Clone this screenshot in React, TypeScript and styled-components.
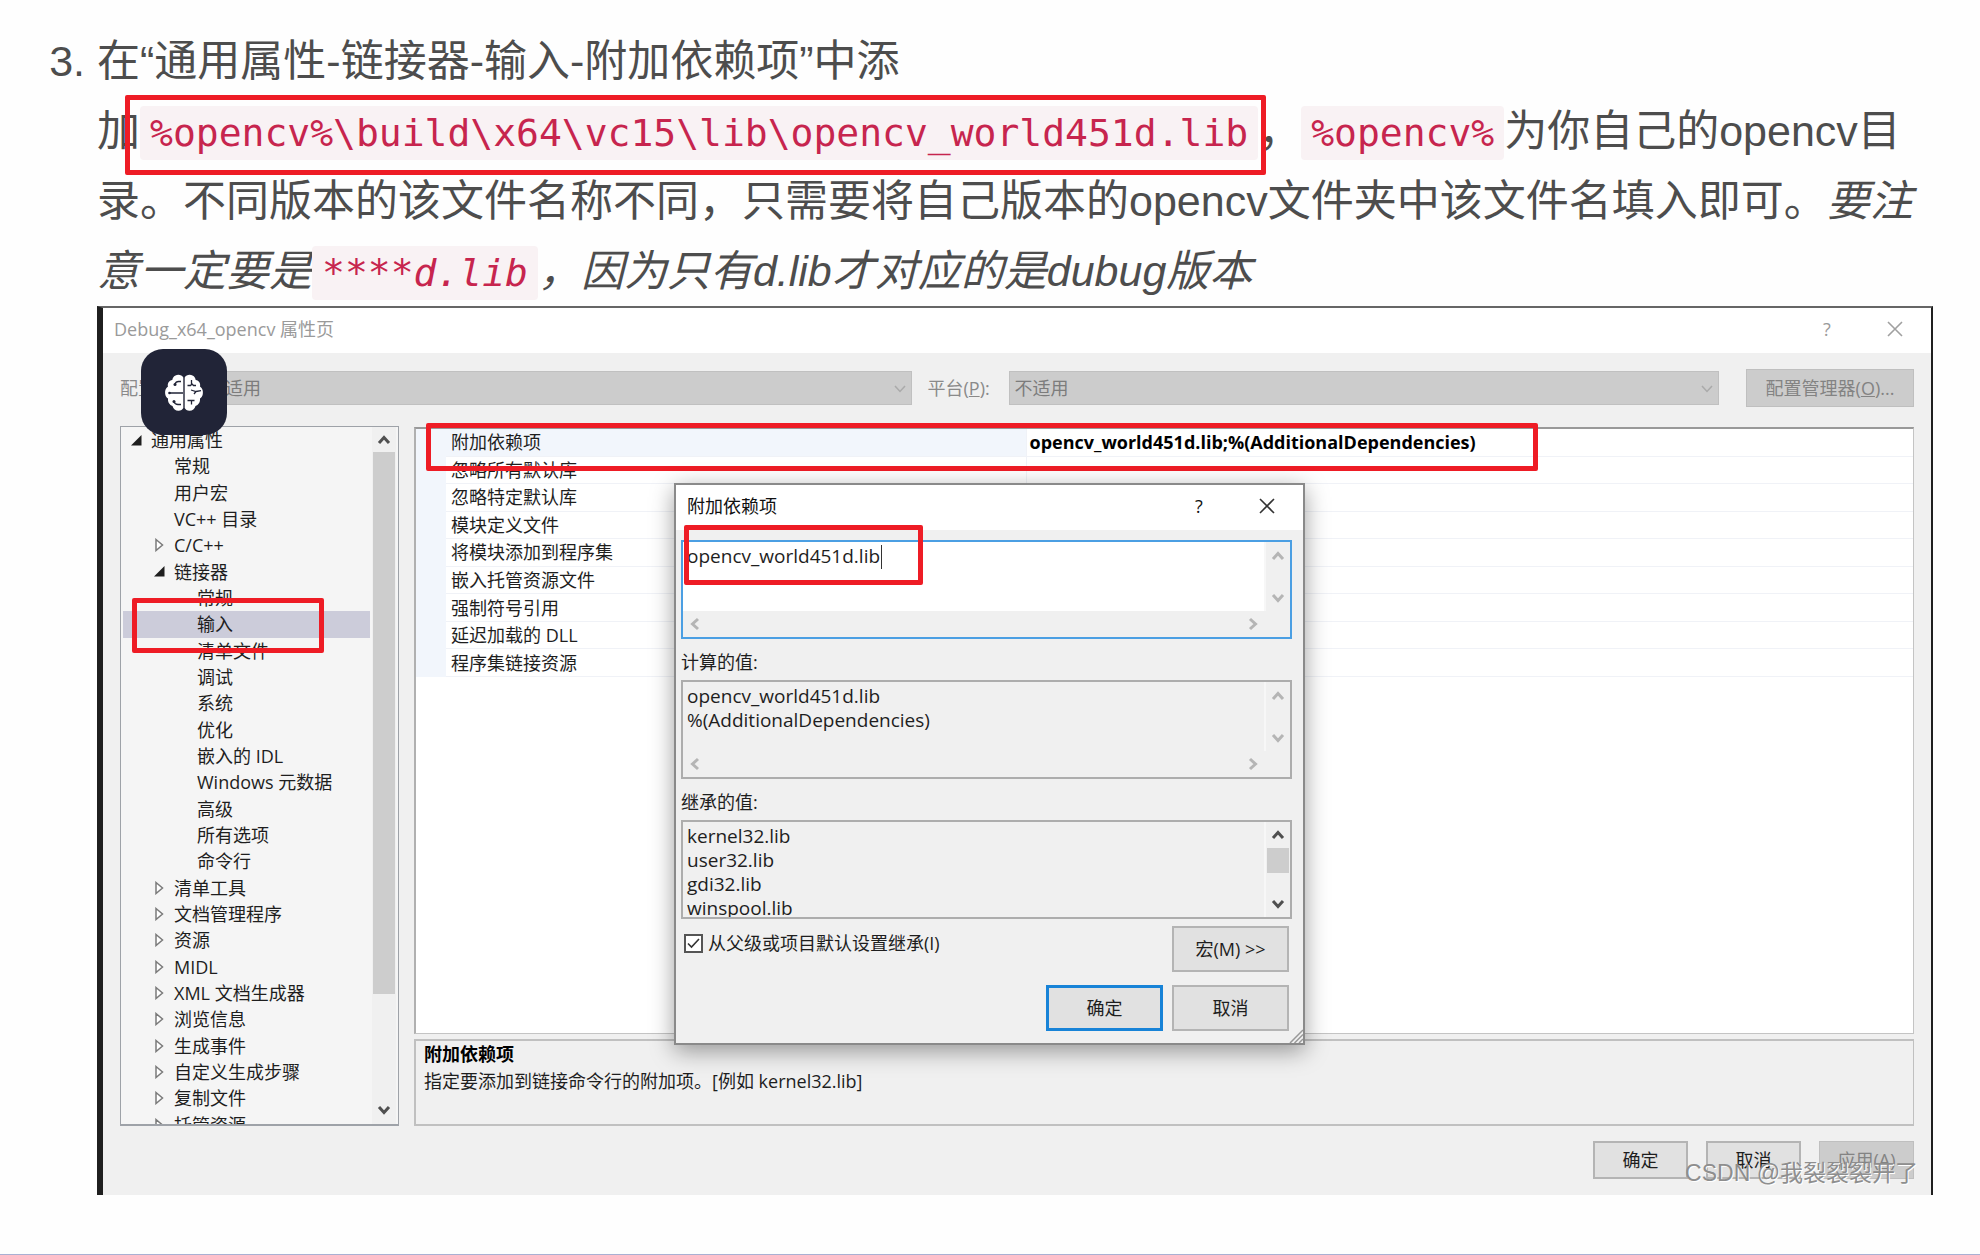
import React from 'react';
import styled, { createGlobalStyle } from 'styled-components';

const uiFont = `"Open Sans", "Noto Sans CJK SC", sans-serif`;
const articleFont = `"Liberation Sans", "Noto Sans CJK SC", sans-serif`;
const red = '#ee1c25';

const GlobalStyle = createGlobalStyle`
  *, *::before, *::after { box-sizing: border-box; }
  body { margin: 0; background: #fefefe; }
  button, select, textarea, input { font: inherit; color: inherit; margin: 0; }
`;

const Page = styled.div`
  display: flex;
  flex-direction: column;
  min-height: 100vh;
  padding: 26px 47px 0 97px;
  border-bottom: 1px solid #a9b0d3;
  font-family: ${articleFont};
  color: #4d4d4d;
`;

const Steps = styled.ol`
  margin: 0;
  padding: 0;
  font-size: 43px;
  line-height: 70px;
`;

const Code = styled.code`
  position: relative;
  padding: 5px 10px;
  border-radius: 4px;
  background: #f9f2f4;
  color: #c7254e;
  font-family: "DejaVu Sans Mono", monospace;
  font-size: 38px;
  line-height: 44px;
  white-space: nowrap;
`;

const Mark = styled.span`
  position: absolute;
  z-index: 1;
  border: 5px solid ${red};
  border-radius: 2px;
  pointer-events: none;
`;

const CodeMark = styled(Mark)`
  inset: -11px -8px -15px -15px;
`;

const RowMark = styled(Mark)`
  top: -6px;
  left: 10px;
  right: 375px;
  height: 48px;
`;

const TreeMark = styled(Mark)`
  top: 290px;
  left: 29px;
  width: 192px;
  height: 55px;
`;

const EditMark = styled(Mark)`
  top: -5px;
  left: 8px;
  width: 239px;
  height: 60px;
`;

const WindowFrame = styled.section`
  position: relative;
  border: solid #1f1f1f;
  border-width: 2px 2px 0 6px;
  border-top-color: #666;
  background: #f0f0f0;
  font-family: ${uiFont};
  font-size: 18px;
  line-height: 24px;
  color: #1e1e1e;
`;

const TitleBar = styled.header<{ $muted?: boolean }>`
  display: flex;
  align-items: center;
  height: 45px;
  padding: 0 24px 3px 11px;
  background: #fff;
  color: ${(p) => (p.$muted ? '#9a9a9a' : '#111')};
`;

const Title = styled.h2`
  flex: 1;
  margin: 0;
  font-size: 18px;
  font-weight: 400;
`;

const CaptionButton = styled.button`
  display: grid;
  place-items: center;
  width: 24px;
  height: 28px;
  margin-left: 44px;
  padding: 0;
  border: 0;
  background: none;
`;

const ConfigBar = styled.div`
  display: flex;
  align-items: center;
  height: 38px;
  margin: 16px 17px 19px;
  color: #8a8a8a;
`;

const ConfigLabel = styled.label`
  width: 81px;
  white-space: nowrap;
`;

const SelectWrap = styled.div<{ $gap: number }>`
  position: relative;
  flex: 1;
  margin-right: ${(p) => p.$gap}px;
`;

const Select = styled.select`
  appearance: none;
  display: block;
  width: 100%;
  height: 34px;
  padding: 0 5px;
  border: 1px solid #c0c0c0;
  border-radius: 0;
  background: #ccc;
  opacity: 1;
  color: #7c7c7c;
`;

const SelectArrow = styled.span`
  position: absolute;
  top: 11px;
  right: 5px;
  display: flex;
`;

const PushButton = styled.button<{ $width: number; $tall?: boolean; $primary?: boolean }>`
  width: ${(p) => p.$width}px;
  height: ${(p) => (p.$tall ? 46 : 38)}px;
  padding: 0;
  border: ${(p) => (p.$primary ? '3px solid #1883d7' : '2px solid #b4b4b4')};
  background: #e1e1e1;
  white-space: nowrap;
  &:disabled {
    border: 1px solid #bfbfbf;
    background: #ccc;
    color: #838383;
  }
`;

const Workspace = styled.div`
  display: flex;
  gap: 15px;
  height: 700px;
  margin: 0 17px;
`;

const TreePanel = styled.nav`
  display: grid;
  grid-template-columns: 1fr 24px;
  column-gap: 2px;
  width: 279px;
  padding-right: 2px;
  border: 2px solid #9ea2a8;
  border-width: 1px 1px 2px;
  background: #f5f5f5;
  overflow: hidden;
`;

/* The last row is cut by the lower edge of the panel. */
const TreeList = styled.ul`
  display: grid;
  grid-auto-rows: 1fr;
  height: calc(100% + 14px);
  margin: 0 0 0 2px;
  padding: 0;
  list-style: none;
`;

const TreeItem = styled.li<{ $level: number; $selected?: boolean }>`
  display: flex;
  align-items: center;
  padding-left: ${(p) => 8 + p.$level * 23}px;
  background: ${(p) => (p.$selected ? '#ccccda' : 'transparent')};
  white-space: nowrap;
`;

const Twisty = styled.span`
  display: flex;
  width: 20px;
  flex: none;
`;

const ScrollTrack = styled.div`
  display: flex;
  flex-direction: column;
  align-items: center;
  background: #f0f0f0;
`;

const ArrowSlot = styled.span<{ $size: number }>`
  display: grid;
  place-items: center;
  width: 100%;
  height: ${(p) => p.$size}px;
`;

const Thumb = styled.span<{ $height: number }>`
  width: 22px;
  height: ${(p) => p.$height}px;
  margin-bottom: auto;
  background: #cdcdcd;
`;

const Details = styled.div`
  display: flex;
  flex: 1;
  flex-direction: column;
  gap: 5px;
  min-width: 0;
  padding-top: 1px;
`;

const GridPanel = styled.div`
  position: relative;
  flex: 1;
  border: 1px solid #c4c4c4;
  border-top: 2px solid #999;
  border-left: 2px solid #b0b0b0;
  background: #fff;
`;

const PropertyTable = styled.table`
  width: 100%;
  height: 248px;
  border-collapse: collapse;
  table-layout: fixed;
`;

const NameCell = styled.th<{ $selected?: boolean }>`
  width: 595px;
  padding: 0 0 0 5px;
  border-left: 30px solid #f2f6fc;
  border-bottom: 1px solid #f0f2f7;
  border-right: 1px solid #f0f2f7;
  background: ${(p) => (p.$selected ? '#f2f6fc' : '#fff')};
  font-weight: 400;
  text-align: left;
`;

const ValueCell = styled.td`
  padding: 0 0 0 3px;
  border-bottom: 1px solid #f0f2f7;
  color: #000;
  font-weight: 700;
`;

const Description = styled.div`
  height: 87px;
  padding: 0 8px;
  border: 2px solid #c0c0c0;
  border-right-width: 1px;
  p { margin: 0; line-height: 27px; white-space: nowrap; }
  p:first-child { font-weight: 700; color: #000; }
`;

const Footer = styled.footer`
  position: relative;
  display: flex;
  justify-content: flex-end;
  gap: 18px;
  padding: 15px 17px 16px;
`;

const Watermark = styled.span`
  position: absolute;
  right: 13px;
  bottom: 6px;
  font-family: ${articleFont};
  font-size: 23px;
  line-height: 32px;
  color: #8e8e8e;
  text-shadow: 1px 1px 0 #fff;
  white-space: nowrap;
`;

const AppBadge = styled.button`
  position: absolute;
  top: 41px;
  left: 38px;
  z-index: 2;
  display: grid;
  place-items: center;
  width: 86px;
  height: 86px;
  padding: 2px 0 0;
  border: 0;
  border-radius: 22px;
  background: #212437;
`;

const Dialog = styled.section`
  position: absolute;
  top: 175px;
  left: 571px;
  z-index: 3;
  width: 631px;
  border: 2px solid #8a8a8a;
  background: #f0f0f0;
  box-shadow: 0 6px 22px rgba(0, 0, 0, 0.38);
`;

const DialogBody = styled.div`
  position: relative;
  display: flex;
  flex-direction: column;
  padding: 10px 11px 12px 5px;
`;

const FieldLabel = styled.label`
  margin: 10px 0 5px;
  line-height: 26px;
`;

const Field = styled.div<{ $active?: boolean; $wide?: boolean }>`
  position: relative;
  display: grid;
  grid-template-columns: 1fr 24px;
  grid-template-rows: 1fr ${(p) => (p.$wide ? '' : '26px')};
  height: 99px;
  border: 2px solid ${(p) => (p.$active ? '#4b9fe3' : '#adadad')};
  background: #f0f0f0;
`;

const FieldText = styled.textarea<{ $active?: boolean }>`
  display: block;
  width: 100%;
  height: 100%;
  padding: 2px 4px 0;
  border: 0;
  border-right: 2px solid #f7f7f7;
  border-radius: 0;
  outline: 0;
  resize: none;
  overflow: hidden;
  white-space: pre;
  font-size: 19px;
  line-height: 24px;
  background: ${(p) => (p.$active ? '#fff' : 'transparent')};
`;

const Caret = styled.span`
  position: absolute;
  top: 3px;
  left: 198px;
  width: 1px;
  height: 24px;
  background: #333;
`;

const VerticalBar = styled(ScrollTrack)`
  justify-content: space-between;
  background: none;
`;

const HorizontalBar = styled.div`
  display: flex;
  align-items: center;
  justify-content: space-between;
  padding: 0 6px 0 5px;
`;

const OptionRow = styled.div`
  display: flex;
  align-items: flex-start;
  justify-content: space-between;
  padding: 7px 3px 0 3px;
`;

const CheckLabel = styled.label`
  display: flex;
  align-items: center;
  gap: 5px;
  height: 34px;
`;

const Check = styled.span`
  position: relative;
  display: grid;
  place-items: center;
  width: 19px;
  height: 19px;
  input {
    appearance: none;
    position: absolute;
    inset: 0;
    border: 2px solid #555;
    background: #fff;
  }
  svg { position: relative; }
`;

const DialogButtons = styled.div`
  display: flex;
  justify-content: flex-end;
  gap: 9px;
  padding: 13px 3px 0 0;
`;

const Grip = styled.svg`
  position: absolute;
  right: 0;
  bottom: 0;
`;

const turns = { up: 0, right: 90, down: 180, left: 270 };

const Chevron = ({ dir, color = '#505050', stroke = 3 }: { dir: keyof typeof turns; color?: string; stroke?: number }) => (
  <svg width="14" height="14" viewBox="0 0 14 14" fill="none" aria-hidden="true">
    <path d="M2 10 7 4.500 12 10" stroke={color} strokeWidth={stroke} transform={`rotate(${turns[dir]} 7 7)`} />
  </svg>
);

const Cross = ({ color }: { color: string }) => (
  <svg width="16" height="16" viewBox="0 0 16 16" aria-hidden="true">
    <path d="M1 1 15 15M15 1 1 15" stroke={color} strokeWidth="1.600" />
  </svg>
);

const Brain = () => (
  <svg width="40" height="38" viewBox="0 0 40 38" aria-hidden="true">
    <path
      fill="#fff"
      d="M19.300 3.500C18 .8 14 .2 11.500 1.500 9.500 2.500 8.500 4.200 8.300 6 5 6.500 3.200 9.500 4 12.500 1.500 14 .8 17 1.200 20c.3 2.300 1.400 3.700 2.800 4.500-.4 3.500 1.500 6.500 4.500 7.500.8 3 3.300 5 6.200 4.800 2-.1 3.900-1.200 4.600-2.800zM20.700 3.500C22 .8 26 .2 28.500 1.500c2 1 3 2.700 3.200 4.500 3.300.5 5.100 3.500 4.300 6.500 2.500 1.500 3.200 4.500 2.800 7.500-.3 2.300-1.400 3.700-2.800 4.500.4 3.500-1.500 6.500-4.500 7.500-.8 3-3.300 5-6.200 4.800-2-.1-3.900-1.200-4.600-2.800z"
    />
    <g fill="none" stroke="#212437" strokeWidth="1.300">
      <path d="M17 7.500h-2.500c-2 0-3 1.200-3.500 2.800M5 19h14M17 30.500h-3c-2 0-3.500-1.200-4.200-3" />
      <path d="M27.500 6v4.500M23.500 11.500h3l1.500-1.500 1.500 1.500h2.500M27 16l5 1.500 5-.8M32 17.500 30 20M23.500 26.500h7M27.500 26.500v4" />
    </g>
    <g fill="#212437">
      <circle cx="11" cy="10.500" r="1.500" />
      <circle cx="5.500" cy="19" r="1.300" />
      <circle cx="10" cy="27.500" r="1.500" />
    </g>
  </svg>
);

type Node = [level: number, text: string, state?: 'open' | 'closed'];

const nodes: Node[] = [
  [0, '通用属性', 'open'],
  [1, '常规'],
  [1, '用户宏'],
  [1, 'VC++ 目录'],
  [1, 'C/C++', 'closed'],
  [1, '链接器', 'open'],
  [2, '常规'],
  [2, '输入'],
  [2, '清单文件'],
  [2, '调试'],
  [2, '系统'],
  [2, '优化'],
  [2, '嵌入的 IDL'],
  [2, 'Windows 元数据'],
  [2, '高级'],
  [2, '所有选项'],
  [2, '命令行'],
  [1, '清单工具', 'closed'],
  [1, '文档管理程序', 'closed'],
  [1, '资源', 'closed'],
  [1, 'MIDL', 'closed'],
  [1, 'XML 文档生成器', 'closed'],
  [1, '浏览信息', 'closed'],
  [1, '生成事件', 'closed'],
  [1, '自定义生成步骤', 'closed'],
  [1, '复制文件', 'closed'],
  [1, '托管资源', 'closed'],
];

const properties = [
  ['附加依赖项', 'opencv_world451d.lib;%(AdditionalDependencies)'],
  ['忽略所有默认库', ''],
  ['忽略特定默认库', ''],
  ['模块定义文件', ''],
  ['将模块添加到程序集', ''],
  ['嵌入托管资源文件', ''],
  ['强制符号引用', ''],
  ['延迟加载的 DLL', ''],
  ['程序集链接资源', ''],
];

const TwistyIcon = ({ state }: { state?: 'open' | 'closed' }) => (
  <Twisty>
    {state === 'open' && (
      <svg width="11" height="11" viewBox="0 0 11 11" aria-hidden="true">
        <path d="M10.500 0v10.500H0z" fill="#1e1e1e" />
      </svg>
    )}
    {state === 'closed' && (
      <svg width="11" height="14" viewBox="0 0 11 14" aria-hidden="true">
        <path d="M2 1.500 8.500 7 2 12.500z" fill="#fff" stroke="#7b7b7b" strokeWidth="1.500" />
      </svg>
    )}
  </Twisty>
);

const pale = '#b5b5b5';

const ValueBox = ({ id, value, active }: { id: string; value: string; active?: boolean }) => (
  <Field $active={active}>
    <FieldText
      id={id}
      $active={active}
      defaultValue={value}
      readOnly={!active}
      spellCheck={false}
      aria-label={active ? '附加依赖项' : undefined}
    />
    <VerticalBar>
      <ArrowSlot $size={28}><Chevron dir="up" color={pale} /></ArrowSlot>
      <ArrowSlot $size={26}><Chevron dir="down" color={pale} /></ArrowSlot>
    </VerticalBar>
    <HorizontalBar>
      <Chevron dir="left" color={pale} />
      <Chevron dir="right" color={pale} />
    </HorizontalBar>
    {active && <Caret />}
  </Field>
);

const DependenciesDialog = () => (
  <Dialog role="dialog" aria-label="附加依赖项">
    <TitleBar>
      <Title>附加依赖项</Title>
      <CaptionButton>?</CaptionButton>
      <CaptionButton aria-label="关闭"><Cross color="#333" /></CaptionButton>
    </TitleBar>
    <DialogBody>
      <ValueBox id="edit" value="opencv_world451d.lib" active />
      <FieldLabel htmlFor="evaluated">计算的值:</FieldLabel>
      <ValueBox id="evaluated" value={'opencv_world451d.lib\n%(AdditionalDependencies)'} />
      <FieldLabel htmlFor="inherited">继承的值:</FieldLabel>
      <Field $wide>
        <FieldText id="inherited" readOnly defaultValue={'kernel32.lib\nuser32.lib\ngdi32.lib\nwinspool.lib'} />
        <ScrollTrack>
          <ArrowSlot $size={26}><Chevron dir="up" /></ArrowSlot>
          <Thumb $height={25} />
          <ArrowSlot $size={26}><Chevron dir="down" /></ArrowSlot>
        </ScrollTrack>
      </Field>
      <OptionRow>
        <CheckLabel>
          <Check>
            <input type="checkbox" defaultChecked />
            <svg width="15" height="15" viewBox="0 0 15 15" fill="none" aria-hidden="true">
              <path d="M2 7.500 5.500 11 13 3" stroke="#333" strokeWidth="1.600" />
            </svg>
          </Check>
          从父级或项目默认设置继承(I)
        </CheckLabel>
        <PushButton $width={117} $tall>宏(M) &gt;&gt;</PushButton>
      </OptionRow>
      <DialogButtons>
        <PushButton $width={117} $tall $primary>确定</PushButton>
        <PushButton $width={117} $tall>取消</PushButton>
      </DialogButtons>
      <Grip width="14" height="14" viewBox="0 0 14 14" aria-hidden="true">
        <path d="M1 14 14 1M5.500 14 14 5.500M10 14 14 10" stroke="#999" strokeWidth="1.500" />
      </Grip>
      <EditMark />
    </DialogBody>
  </Dialog>
);

const App = () => (
  <>
    <GlobalStyle />
    <Page>
      <Steps start={3}>
        <li>
          在“通用属性-链接器-输入-附加依赖项”中添加
          <Code>
            %opencv%\build\x64\vc15\lib\opencv_world451d.lib
            <CodeMark />
          </Code>
          ，<Code>%opencv%</Code>
          为你自己的opencv目录。不同版本的该文件名称不同，只需要将自己版本的opencv文件夹中该文件名填入即可。
          <em>
            要注意一定要是<Code>****d.lib</Code>，因为只有d.lib才对应的是dubug版本
          </em>
        </li>
      </Steps>

      <WindowFrame>
        <TitleBar $muted>
          <Title>Debug_x64_opencv 属性页</Title>
          <CaptionButton>?</CaptionButton>
          <CaptionButton aria-label="关闭"><Cross color="#a0a0a0" /></CaptionButton>
        </TitleBar>

        <ConfigBar>
          <ConfigLabel htmlFor="configuration">配置(C):</ConfigLabel>
          <SelectWrap $gap={16}>
            <Select id="configuration" disabled><option>不适用</option></Select>
            <SelectArrow><Chevron dir="down" color="#aaa" stroke={1.5} /></SelectArrow>
          </SelectWrap>
          <ConfigLabel htmlFor="platform">平台(<u>P</u>):</ConfigLabel>
          <SelectWrap $gap={27}>
            <Select id="platform" disabled><option>不适用</option></Select>
            <SelectArrow><Chevron dir="down" color="#aaa" stroke={1.5} /></SelectArrow>
          </SelectWrap>
          <PushButton $width={168} disabled>配置管理器(<u>O</u>)...</PushButton>
        </ConfigBar>

        <Workspace>
          <TreePanel aria-label="属性">
            <TreeList role="tree">
              {nodes.map(([level, text, state], i) => (
                <TreeItem
                  key={i}
                  role="treeitem"
                  aria-selected={text === '输入'}
                  $level={level}
                  $selected={text === '输入'}
                >
                  <TwistyIcon state={state} />
                  {text}
                </TreeItem>
              ))}
            </TreeList>
            <ScrollTrack>
              <ArrowSlot $size={25}><Chevron dir="up" /></ArrowSlot>
              <Thumb $height={542} />
              <ArrowSlot $size={29}><Chevron dir="down" /></ArrowSlot>
            </ScrollTrack>
          </TreePanel>

          <Details>
            <GridPanel>
              <PropertyTable>
                <tbody>
                  {properties.map(([name, value], i) => (
                    <tr key={name}>
                      <NameCell scope="row" $selected={i === 0}>{name}</NameCell>
                      <ValueCell>{value}</ValueCell>
                    </tr>
                  ))}
                </tbody>
              </PropertyTable>
              <RowMark />
            </GridPanel>
            <Description>
              <p>附加依赖项</p>
              <p>指定要添加到链接命令行的附加项。[例如 kernel32.lib]</p>
            </Description>
          </Details>
        </Workspace>

        <Footer>
          <PushButton $width={95}>确定</PushButton>
          <PushButton $width={95}>取消</PushButton>
          <PushButton $width={95} disabled>应用(<u>A</u>)</PushButton>
          <Watermark>CSDN @我裂裂裂开了</Watermark>
        </Footer>

        <TreeMark />
        <AppBadge aria-label="助手"><Brain /></AppBadge>
        <DependenciesDialog />
      </WindowFrame>
    </Page>
  </>
);

export default App;
